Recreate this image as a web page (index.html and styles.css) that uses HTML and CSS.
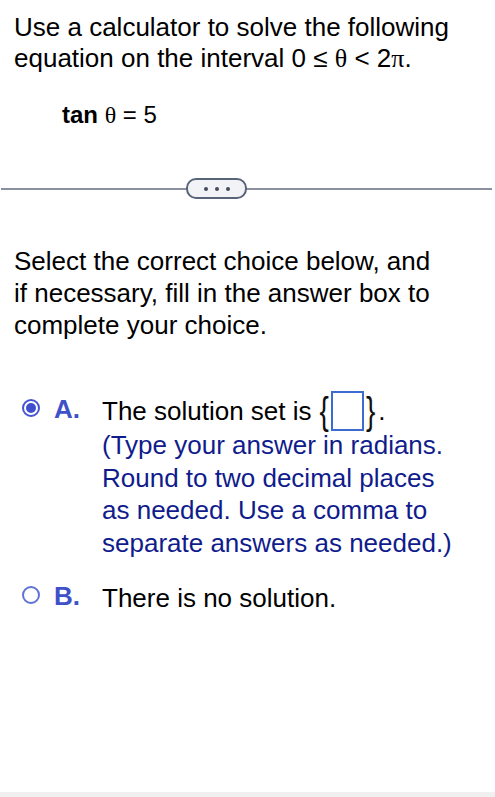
FILE: index.html
```html
<!DOCTYPE html>
<html>
<head>
<meta charset="utf-8">
<link rel="stylesheet" href="styles.css">
</head>
<body>
<div class="page">
  <div class="question">
    <p class="prompt">Use a calculator to solve the following equation on the interval 0 ≤ <span class="sym">θ</span> &lt; 2<span class="sym">π</span>.</p>
    <p class="equation"><b>tan</b> <span class="sym">θ</span> = 5</p>
  </div>
  <div class="divider">
    <span class="more"><i></i><i></i><i></i></span>
  </div>
  <p class="instructions">Select the correct choice below, and if necessary, fill in the answer box to complete your choice.</p>
  <div class="choices">
    <div class="choice">
      <span class="radio checked"></span>
      <span class="letter">A.</span>
      <div class="body">
        <div class="line1">The solution set is <span class="set"><span class="brace">{</span><span class="box"></span><span class="brace">}</span></span>.</div>
        <div class="hint">(Type your answer in radians. Round to two decimal places as needed. Use a comma to separate answers as needed.)</div>
      </div>
    </div>
    <div class="choice choice-b">
      <span class="radio"></span>
      <span class="letter">B.</span>
      <div class="body">
        <div class="line1">There is no solution.</div>
      </div>
    </div>
  </div>
</div>
<div class="footer"></div>
</body>
</html>
```
FILE: styles.css
```css
html, body {
  margin: 0;
  padding: 0;
  background: #ffffff;
}
body {
  font-family: "Liberation Sans", Arial, sans-serif;
  color: #000;
  width: 495px;
  height: 797px;
  position: relative;
  overflow: hidden;
}
.page {
  height: 792px;
}
p { margin: 0; }
.sym {
  font-family: "Liberation Serif", "Times New Roman", serif;
  font-weight: normal;
}
.question {
  padding: 12px 30px 0 14px;
}
.prompt {
  font-size: 26px;
  line-height: 31px;
}
.equation {
  font-size: 24px;
  line-height: 30px;
  margin-top: 26px;
  padding-left: 48px;
}
.divider {
  margin-top: 48px;
  position: relative;
  height: 21px;
  display: flex;
  align-items: center;
  justify-content: flex-start;
}
.divider::before {
  content: "";
  position: absolute;
  left: 1px;
  right: 3px;
  top: 10px;
  height: 1.5px;
  background: #8b90a0;
}
.more {
  position: relative;
  margin-left: 186px;
  width: 57px;
  height: 17px;
  border: 2px solid #5a6478;
  border-radius: 10px;
  background: #f2f3f6;
  display: flex;
  align-items: center;
  justify-content: center;
  gap: 7px;
}
.more i {
  width: 4px;
  height: 4px;
  border-radius: 50%;
  background: #444c5c;
  display: block;
}
.instructions {
  font-size: 26px;
  line-height: 32px;
  padding: 0 53px 0 14px;
  margin-top: 46px;
}
.choices {
  margin-top: 52px;
}
.choice {
  display: flex;
  align-items: flex-start;
  font-size: 26px;
}
.radio {
  flex: none;
  width: 14px;
  height: 14px;
  border: 2.5px solid #6172d6;
  border-radius: 50%;
  margin: 6px 0 0 22px;
  box-sizing: content-box;
  position: relative;
}
.radio.checked {
  border-color: #4555d6;
}
.radio.checked::after {
  content: "";
  position: absolute;
  left: 2px;
  top: 2px;
  width: 10px;
  height: 10px;
  border-radius: 50%;
  background: #3f4fd0;
}
.letter {
  flex: none;
  width: 48px;
  margin-left: 14px;
  font-weight: bold;
  color: #3f51c8;
  line-height: 32px;
}
.body {
  flex: 1;
  padding-right: 26px;
}
.line1 {
  line-height: 32px;
  height: 36px;
  display: flex;
  align-items: center;
}
.set {
  display: inline-flex;
  align-items: center;
  margin-left: 8px;
  margin-right: 3px;
}
.brace {
  font-size: 28px;
  font-weight: 300;
  transform: scaleY(1.4);
  line-height: 1;
  display: inline-block;
  color: #111;
}
.box {
  display: inline-block;
  width: 29px;
  height: 36px;
  border: 2px solid #3c6bd1;
  margin: 0 2px;
}
.hint {
  color: #101c8c;
  line-height: 32.5px;
}
.choice-b {
  margin-top: 21px;
}
.footer {
  position: absolute;
  left: 0;
  right: 0;
  bottom: 0;
  height: 5px;
  background: #f0f0f0;
}
```
